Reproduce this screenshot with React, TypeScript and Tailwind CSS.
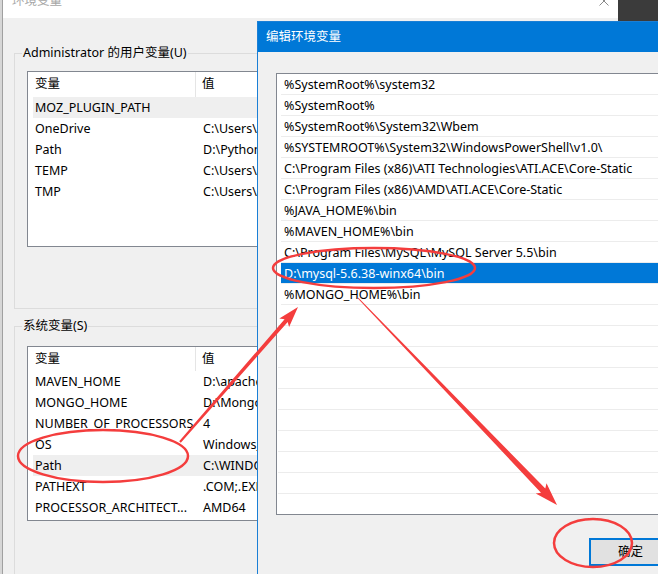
const userVars: [string, string][] = [
  ["MOZ_PLUGIN_PATH", ""],
  ["OneDrive", "C:\\Users\\Administrator\\OneDrive"],
  ["Path", "D:\\Python27\\;D:\\Python27\\Scripts"],
  ["TEMP", "C:\\Users\\Administrator\\AppData\\Local\\Temp"],
  ["TMP", "C:\\Users\\Administrator\\AppData\\Local\\Temp"],
];

const systemVars: [string, string][] = [
  ["MAVEN_HOME", "D:\\apache-maven-3.5.2"],
  ["MONGO_HOME", "D:\\MongoDB\\Server\\3.6"],
  ["NUMBER_OF_PROCESSORS", "4"],
  ["OS", "Windows_NT"],
  ["Path", "C:\\WINDOWS\\system32;C:\\WINDOWS"],
  ["PATHEXT", ".COM;.EXE;.BAT;.CMD"],
  ["PROCESSOR_ARCHITECT...", "AMD64"],
];

const pathEntries = [
  "%SystemRoot%\\system32",
  "%SystemRoot%",
  "%SystemRoot%\\System32\\Wbem",
  "%SYSTEMROOT%\\System32\\WindowsPowerShell\\v1.0\\",
  "C:\\Program Files (x86)\\ATI Technologies\\ATI.ACE\\Core-Static",
  "C:\\Program Files (x86)\\AMD\\ATI.ACE\\Core-Static",
  "%JAVA_HOME%\\bin",
  "%MAVEN_HOME%\\bin",
  "C:\\Program Files\\MySQL\\MySQL Server 5.5\\bin",
  "D:\\mysql-5.6.38-winx64\\bin",
  "%MONGO_HOME%\\bin",
];

const SELECTED_PATH = 9;

function arrowPoints(
  x1: number,
  y1: number,
  x2: number,
  y2: number,
  w1: number,
  w2: number,
  headLen: number,
  headW: number,
) {
  const len = Math.hypot(x2 - x1, y2 - y1);
  const ux = (x2 - x1) / len;
  const uy = (y2 - y1) / len;
  const px = -uy;
  const py = ux;
  const bx = x2 - ux * headLen;
  const by = y2 - uy * headLen;
  const pts = [
    [x1 + (px * w1) / 2, y1 + (py * w1) / 2],
    [bx + (px * w2) / 2, by + (py * w2) / 2],
    [bx + (px * headW) / 2 - ux * 3, by + (py * headW) / 2 - uy * 3],
    [x2, y2],
    [bx - (px * headW) / 2 - ux * 3, by - (py * headW) / 2 - uy * 3],
    [bx - (px * w2) / 2, by - (py * w2) / 2],
    [x1 - (px * w1) / 2, y1 - (py * w1) / 2],
  ];
  return pts.map((p) => p.map((n) => n.toFixed(1)).join(",")).join(" ");
}

function VarList({
  rows,
  active,
  headerClass,
  heightClass,
}: {
  rows: [string, string][];
  active: number;
  headerClass: string;
  heightClass: string;
}) {
  return (
    <div
      className={`w-[560px] overflow-hidden border border-[#828790] bg-white ${heightClass}`}
    >
      <div className={`flex pl-[5px] ${headerClass}`}>
        <div className="flex w-[163px] items-center border-r border-[#e5e5e5] pl-[2px]">
          变量
        </div>
        <div className="flex items-center pl-[6px]">值</div>
      </div>
      {rows.map(([name, value], i) => (
        <div
          key={name}
          className={`ml-[5px] flex h-[21px] items-center leading-[21px] ${
            i === active ? "bg-[#efefef]" : ""
          }`}
        >
          <div className="w-[163px] overflow-hidden whitespace-nowrap pl-[2px]">
            {name}
          </div>
          <div className="whitespace-nowrap pl-[7px]">{value}</div>
        </div>
      ))}
    </div>
  );
}

function GroupBox({
  label,
  className,
  children,
}: {
  label: string;
  className: string;
  children: React.ReactNode;
}) {
  return (
    <div
      className={`relative w-[590px] shrink-0 border border-[#dcdcdc] pl-[12px] ${className}`}
    >
      <span className="absolute -top-[9px] left-[7px] bg-[#f0f0f0] px-[1px] leading-[16px]">
        {label}
      </span>
      {children}
    </div>
  );
}

function EnvWindow() {
  return (
    <div className="absolute left-0 top-0 flex h-[574px] w-[618px]">
      <div className="w-[2px] bg-[#d6d6d6]" />
      <div className="flex flex-1 flex-col overflow-hidden border-l border-[#a0a0a0] bg-[#f0f0f0]">
        <div className="flex h-[18px] shrink-0 justify-between overflow-hidden bg-white pl-[9px] pr-[9px]">
          <span className="-mt-[7px] leading-[16px] text-[#a6a6a6]">
            环境变量
          </span>
          <svg width="10" height="10" viewBox="0 0 10 10" className="-mt-[4px]">
            <path d="M0.5 0.5 L9.5 9.5 M9.5 0.5 L0.5 9.5" stroke="#8a8a8a" strokeWidth="1" />
          </svg>
        </div>
        <div className="flex shrink-0 flex-col pl-[11px] pt-[35px]">
          <GroupBox label="Administrator 的用户变量(U)" className="h-[256px] pt-[17px]">
            <VarList
              rows={userVars}
              active={0}
              headerClass="h-[25px]"
              heightClass="h-[176px]"
            />
          </GroupBox>
          <GroupBox label="系统变量(S)" className="mt-[17px] h-[260px] pt-[19px]">
            <VarList
              rows={systemVars}
              active={4}
              headerClass="h-[24px]"
              heightClass="h-[175px]"
            />
          </GroupBox>
        </div>
      </div>
    </div>
  );
}

function EditDialog() {
  const blanks = Array.from({ length: 11 }, (_, i) => i);
  return (
    <div className="absolute left-[257px] top-[21px] flex h-[560px] w-[430px] flex-col border border-[#1a7fd6] bg-[#f0f0f0]">
      <div className="h-[30px] shrink-0 bg-[#0078d7] pl-[8px] leading-[30px] text-white">
        编辑环境变量
      </div>
      <div className="ml-[18px] mt-[21px] h-[442px] w-[400px] shrink-0 overflow-hidden border border-[#828790] bg-white">
        {pathEntries.map((entry, i) => (
          <div
            key={entry}
            className={`ml-[4px] h-[21px] overflow-hidden whitespace-nowrap border-b border-[#ececec] pl-[3px] leading-[22px] ${
              i === SELECTED_PATH ? "bg-[#0078d7] text-white" : ""
            }`}
          >
            {entry}
          </div>
        ))}
        {blanks.map((i) => (
          <div key={i} className="ml-[1px] h-[21px] border-b border-[#ececec]" />
        ))}
      </div>
      <div className="ml-[331px] mt-[23px] flex shrink-0">
        <button className="h-[28px] w-[83px] border-2 border-[#0078d7] bg-[#e1e1e1] text-black">
          确定
        </button>
      </div>
    </div>
  );
}

function Annotations() {
  const red = "#f43d3d";
  return (
    <svg
      className="pointer-events-none absolute left-0 top-0"
      width="658"
      height="574"
      viewBox="0 0 658 574"
    >
      <ellipse cx="103" cy="456" rx="85" ry="26" fill="none" stroke={red} strokeWidth="2.5" />
      <ellipse cx="374" cy="268" rx="101" ry="20" fill="none" stroke={red} strokeWidth="2.5" />
      <ellipse cx="593" cy="543" rx="39" ry="24" fill="none" stroke={red} strokeWidth="2.5" />
      <polygon points={arrowPoints(180, 442, 298, 307, 2, 4, 18, 13)} fill={red} />
      <polygon points={arrowPoints(358, 298, 557, 505, 1, 6, 20, 15)} fill={red} />
    </svg>
  );
}

export default function App() {
  return (
    <div className="relative h-[574px] w-[658px] overflow-hidden bg-[#3b3b3b] font-['Noto_Sans','Noto_Sans_CJK_SC',sans-serif] text-[12.5px] text-black">
      <EnvWindow />
      <EditDialog />
      <Annotations />
    </div>
  );
}
